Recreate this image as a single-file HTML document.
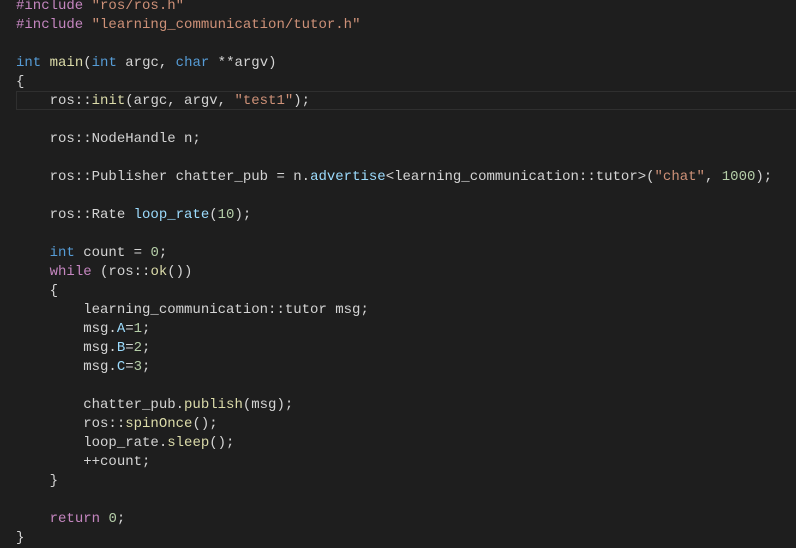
<!DOCTYPE html>
<html><head><meta charset="utf-8"><style>
html,body{margin:0;padding:0;background:#1e1e1e;width:796px;height:545px;overflow:hidden}
pre{margin:0;position:absolute;left:16px;top:-3.5px;font-family:"Liberation Mono","DejaVu Sans Mono",monospace;font-size:14px;line-height:19px;color:#d4d4d4;white-space:pre}
.hl{position:absolute;left:16px;top:91px;width:790px;height:17px;border:1px solid #2f2f2f}
.k{color:#569cd6}.c{color:#c586c0}.s{color:#ce9178}.f{color:#dcdcaa}.n{color:#b5cea8}.v{color:#9cdcfe}
</style></head><body>
<div class="hl"></div>
<pre><span class="c">#include</span> <span class="s">"ros/ros.h"</span>
<span class="c">#include</span> <span class="s">"learning_communication/tutor.h"</span>

<span class="k">int</span> <span class="f">main</span>(<span class="k">int</span> argc, <span class="k">char</span> **argv)
{
    ros::<span class="f">init</span>(argc, argv, <span class="s">"test1"</span>);

    ros::NodeHandle n;

    ros::Publisher chatter_pub = n.<span class="v">advertise</span>&lt;learning_communication::tutor&gt;(<span class="s">"chat"</span>, <span class="n">1000</span>);

    ros::Rate <span class="v">loop_rate</span>(<span class="n">10</span>);

    <span class="k">int</span> count = <span class="n">0</span>;
    <span class="c">while</span> (ros::<span class="f">ok</span>())
    {
        learning_communication::tutor msg;
        msg.<span class="v">A</span>=<span class="n">1</span>;
        msg.<span class="v">B</span>=<span class="n">2</span>;
        msg.<span class="v">C</span>=<span class="n">3</span>;

        chatter_pub.<span class="f">publish</span>(msg);
        ros::<span class="f">spinOnce</span>();
        loop_rate.<span class="f">sleep</span>();
        ++count;
    }

    <span class="c">return</span> <span class="n">0</span>;
}</pre>
</body></html>
